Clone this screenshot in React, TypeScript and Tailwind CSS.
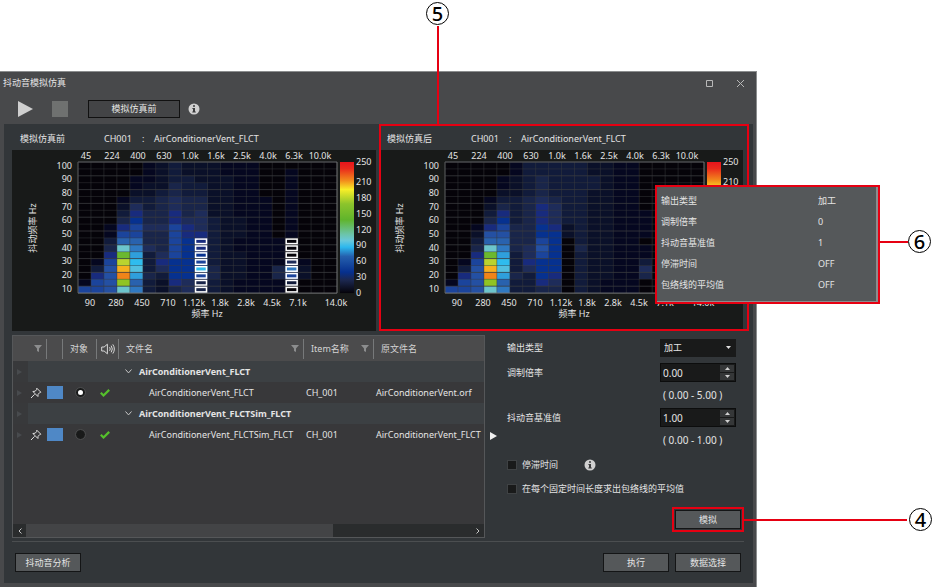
import { useState } from 'react'
import type { ReactNode } from 'react'
import clsx from 'clsx'

const CELL_W = 12.95
const CELL_H = 6.9
const GRID_X = 66
const GRID_Y = 12
const GRID_W = CELL_W * 20
const GRID_H = CELL_H * 19

const PALETTE: Record<string, string> = {
	'.': '#050309',
	a: '#050720',
	b: '#0a1029',
	c: '#111b3b',
	d: '#19254a',
	e: '#1e2c5a',
	f: '#182b7e',
	g: '#063190',
	h: '#1b449c',
	i: '#2450a3',
	j: '#2962ae',
	k: '#2f79c2',
	l: '#2f9fdc',
	m: '#2fbcee',
	n: '#52bfdf',
	o: '#6cc5cc',
	p: '#6bb82f',
	q: '#b9d32f',
	r: '#f6b01f',
	s: '#f08419',
	t: '#90c424',
}

// One string per row, 100 Hz at the top and 10 Hz at the bottom
const BEFORE = [
	'.....abcbbbaaa......',
	'.....abcbbbaaa..a...',
	'....aabccbbbaa..a...',
	'....abbdccbbaa..a...',
	'....bbcdccbbaa..a...',
	'...accdeddbbaaa.a...',
	'...becdeddbbaaa.a...',
	'...cfddfdebbaaa.a...',
	'...dgddfeecbbaa.a...',
	'..afheehfecbbaa.a...',
	'..ahhddhffcbbaa.a...',
	'..cjjddhgfcbaaaa....',
	'..dokedhgfcbaaaa....',
	'..fplcehggcbbaaa....',
	'.ahqmcfgghcbbaaaea..',
	'.cirnceggmdbbaadkb..',
	'.fisldcgghdbbaadhb..',
	'ahitjcbfedcbaaaac...',
	'hhiokcbdedcbaaaa....',
]

const AFTER = [
	'.....acccccbbaa.....',
	'.....acccccbbaa.....',
	'....abcdccccbaa.....',
	'....abcdccccbaa.....',
	'....bbcdcccbbaa.....',
	'...accdedccbbaa.....',
	'...bdcdfeccbbaa.....',
	'...cfcdfeccbbaaa....',
	'...dgcdfeccbbaaa....',
	'..afhddgfbcbbaaa....',
	'..biiddggbcbbaaa....',
	'..cjjddhg.cbbaa.....',
	'..dokdeig.dbbaaa....',
	'..fplcehg.cbbaaa....',
	'.ahqmcfgg.cbbaac....',
	'.cirncegg.cbbaae....',
	'.fisldcgf.cbbaad....',
	'ahitjccfe.cbaaa.....',
	'hhiokccdd.cbaaa.....',
]

const TOP_LABELS = ['45', '224', '400', '630', '1.0k', '1.6k', '2.5k', '4.0k', '6.3k', '10.0k']
const BOTTOM_LABELS = ['90', '280', '450', '710', '1.12k', '1.8k', '2.8k', '4.5k', '7.1k']
const LEVELS = [250, 210, 180, 150, 120, 90, 60, 30, 0]

interface HeatmapProps {
	id: string
	rows: string[]
	selected?: number[]
}

function Heatmap({ id, rows, selected = [] }: HeatmapProps) {
	return (
		<svg
			viewBox="0 0 364 181"
			className="block w-full overflow-visible bg-[#181a19] text-[9px]"
			fill="#e4e4e4"
			dominantBaseline="central"
		>
			<defs>
				<linearGradient id={id} x1="0" y1="0" x2="0" y2="1">
					<stop offset="0" stopColor="#e8141c" />
					<stop offset="0.05" stopColor="#ea2a1c" />
					<stop offset="0.14" stopColor="#f28a1c" />
					<stop offset="0.21" stopColor="#f8ee28" />
					<stop offset="0.32" stopColor="#8cc42c" />
					<stop offset="0.44" stopColor="#60b42c" />
					<stop offset="0.55" stopColor="#6cc4a8" />
					<stop offset="0.6" stopColor="#68c8dc" />
					<stop offset="0.65" stopColor="#2cb8ee" />
					<stop offset="0.72" stopColor="#2560ae" />
					<stop offset="0.84" stopColor="#06308e" />
					<stop offset="0.9" stopColor="#1c2850" />
					<stop offset="1" stopColor="#050309" />
				</linearGradient>
			</defs>

			<g shapeRendering="crispEdges">
				{rows.map((row, y) =>
					row.split('').map((level, x) => (
						<rect
							key={`${x}-${y}`}
							x={GRID_X + x * CELL_W}
							y={GRID_Y + y * CELL_H}
							width={CELL_W}
							height={CELL_H}
							fill={PALETTE[level]}
						/>
					)),
				)}
			</g>

			{Array.from({ length: 20 }, (_, i) => (
				<path
					key={i}
					d={`M${GRID_X + i * CELL_W} ${GRID_Y}v${GRID_H}`}
					stroke="#3a3b3e"
					strokeOpacity="0.5"
				/>
			))}
			{Array.from({ length: 19 }, (_, i) => (
				<path
					key={i}
					d={`M${GRID_X} ${GRID_Y + i * CELL_H}h${GRID_W}`}
					stroke="#3a3b3e"
					strokeOpacity={i % 2 ? 0.45 : 0.8}
				/>
			))}
			<path d={`M${GRID_X} ${GRID_Y + GRID_H}V${GRID_Y}h${GRID_W}`} fill="none" stroke="#555759" />
			<path
				d={`M${GRID_X} ${GRID_Y + GRID_H}h${GRID_W}V${GRID_Y}`}
				fill="none"
				stroke="#77797a"
			/>

			{selected.map((col) =>
				Array.from({ length: 8 }, (_, i) => (
					<rect
						key={`${col}-${i}`}
						x={GRID_X + col * CELL_W + 1}
						y={GRID_Y + (11 + i) * CELL_H + 1.2}
						width={CELL_W - 2}
						height={CELL_H - 2.4}
						fill="none"
						stroke="#fff"
						strokeWidth="1.5"
					/>
				)),
			)}

			{TOP_LABELS.map((label, i) => (
				<text key={label} x={74 + i * 26} y="5" textAnchor="middle">
					{label}
				</text>
			))}
			{BOTTOM_LABELS.map((label, i) => (
				<text key={label} x={78 + i * 26} y="152" textAnchor="middle">
					{label}
				</text>
			))}
			<text x="324" y="152" textAnchor="middle">
				14.0k
			</text>
			{Array.from({ length: 10 }, (_, i) => (
				<text key={i} x="60" y={15 + i * 13.7} textAnchor="end">
					{100 - i * 10}
				</text>
			))}
			<text x="195" y="163" textAnchor="middle">
				频率 Hz
			</text>
			<text transform="translate(20 78) rotate(-90)" textAnchor="middle">
				抖动频率 Hz
			</text>

			<rect x="328" y={GRID_Y} width="14" height={GRID_H} fill={`url(#${id})`} />
			{LEVELS.map((level) => (
				<text key={level} x="344" y={GRID_Y - 1 + GRID_H * (1 - level / 250)}>
					{level}
				</text>
			))}
		</svg>
	)
}

function ChartTitle({ title }: { title: string }) {
	return (
		<h2 className="flex h-[26px] items-center pt-1 pl-2">
			<span className="w-[84px]">{title}</span>
			<span className="w-[38px]">CH001</span>
			<span className="w-3">:</span>
			<span>AirConditionerVent_FLCT</span>
		</h2>
	)
}

function InfoIcon() {
	return (
		<svg width="12" height="12" viewBox="0 0 12 12">
			<circle cx="6" cy="6" r="5.5" fill="#d0d0d0" />
			<path d="M5 2.2h2v1.6H5zM4.4 5H7v3.6h.8v1H4.3v-1H5V6h-.6z" fill="#3a3b3c" />
		</svg>
	)
}

function Funnel() {
	return (
		<svg width="8" height="7" viewBox="0 0 8 7" fill="#8c8d8e">
			<path d="M0 0h8L5 3.5V7L3 6V3.5z" />
		</svg>
	)
}

function Speaker() {
	return (
		<svg width="14" height="12" viewBox="0 0 14 12" fill="none" stroke="#d8d8d8">
			<path d="M.7 4v4h2.4l3.3 2.8V1.2L3.1 4z" />
			<path d="M8.6 4.2q1.3 1.8 0 3.6M10.2 2.7q2.2 3.3 0 6.6M11.8 1.4q3.1 4.6 0 9.2" />
		</svg>
	)
}

function Pin() {
	return (
		<svg width="12" height="12" viewBox="0 0 12 12" fill="none" stroke="#e0e0e0">
			<path d="M6.8 1.2l4 4-1.2.5-1.5 1.6-.2 2.2-5-5 2.3-.3 1.4-1.6zM4.6 7.3L1 11" />
		</svg>
	)
}

function Check() {
	return (
		<svg width="10" height="8" viewBox="0 0 10 8" fill="none" stroke="#55c02c" strokeWidth="2.2">
			<path d="M.8 3.8l2.7 2.7L9.2.9" />
		</svg>
	)
}

function Badge({ children, className }: { children: ReactNode; className?: string }) {
	return (
		<span
			className={clsx(
				'absolute flex size-[23px] items-center justify-center rounded-full border border-black bg-white text-[20px] leading-none font-medium text-black',
				className,
			)}
		>
			{children}
		</span>
	)
}

function PushButton({ children, className }: { children: ReactNode; className?: string }) {
	return (
		<button
			type="button"
			className={clsx(
				'h-[19px] w-[66px] border border-[#141516] bg-[#55585a] text-center hover:bg-[#626567]',
				className,
			)}
		>
			{children}
		</button>
	)
}

function GroupRow({ name }: { name: string }) {
	return (
		<tr className="h-[21px] bg-[#3c4043]">
			<td className="bg-[#38393b] pl-1">
				<svg width="5" height="6" viewBox="0 0 5 6" fill="#484b4e">
					<path d="M0 0l5 3-5 3z" />
				</svg>
			</td>
			<td colSpan={4} />
			<td colSpan={3}>
				<div className="flex items-center gap-[7px] pl-[6px] font-bold">
					<svg width="7" height="5" viewBox="0 0 7 5" fill="none" stroke="#c8c8c8">
						<path d="M.5.5l3 3.4 3-3.4" />
					</svg>
					{name}
				</div>
			</td>
		</tr>
	)
}

interface FileRowProps {
	name: string
	source: string
	checked: boolean
	onSelect: () => void
}

function FileRow({ name, source, checked, onSelect }: FileRowProps) {
	return (
		<tr className="h-[21px]">
			<td className="pl-1">
				<svg width="5" height="6" viewBox="0 0 5 6" fill="#484b4e">
					<path d="M0 0l5 3-5 3z" />
				</svg>
			</td>
			<td className="pl-[2px]">
				<Pin />
			</td>
			<td>
				<div className="h-[13px] bg-[#4f88c6]" />
			</td>
			<td>
				<input
					type="radio"
					name="target"
					aria-label={name}
					checked={checked}
					onChange={onSelect}
					className="mx-auto block size-[9px] appearance-none rounded-full border-2 border-[#191a1a] bg-[#191a1a] outline outline-[#4a4b4c] checked:bg-white"
				/>
			</td>
			<td className="pl-[3px]">
				<Check />
			</td>
			<td className="pl-[30px]">{name}</td>
			<td className="pl-[2px]">CH_001</td>
			<td className="overflow-hidden pl-[2px]">{source}</td>
		</tr>
	)
}

function FileTable() {
	const [target, setTarget] = useState(0)

	return (
		<div className="flex h-[203px] min-w-0 flex-1 flex-col border border-[#555759] bg-[#38383a]">
			<table className="w-full table-fixed text-left whitespace-nowrap [&_svg]:block">
				<colgroup>
					<col className="w-[15px]" />
					<col className="w-[19px]" />
					<col className="w-4" />
					<col className="w-[34px]" />
					<col className="w-[22px]" />
					<col className="w-[185px]" />
					<col className="w-[70px]" />
					<col />
				</colgroup>
				<thead>
					<tr className="h-[25px] bg-[#4b4b4c] text-[#d4d4d4] [&>th]:font-normal">
						<th />
						<th>
							<div className="flex h-5 items-center border-r border-[#77797a] pl-[6px]">
								<Funnel />
							</div>
						</th>
						<th>
							<div className="h-5 border-r border-[#77797a]" />
						</th>
						<th>
							<div className="flex h-5 items-center border-r border-[#77797a] pl-[7px]">对象</div>
						</th>
						<th>
							<div className="flex h-5 items-center border-r border-[#77797a] pl-1">
								<Speaker />
							</div>
						</th>
						<th>
							<div className="flex h-5 items-center justify-between border-r border-[#77797a] pr-1 pl-[7px]">
								文件名
								<Funnel />
							</div>
						</th>
						<th>
							<div className="flex h-5 items-center justify-between border-r border-[#77797a] pr-1 pl-[7px]">
								Item名称
								<Funnel />
							</div>
						</th>
						<th className="pl-[7px]">原文件名</th>
					</tr>
				</thead>
				<tbody>
					<GroupRow name="AirConditionerVent_FLCT" />
					<FileRow
						name="AirConditionerVent_FLCT"
						source="AirConditionerVent.orf"
						checked={target === 0}
						onSelect={() => setTarget(0)}
					/>
					<GroupRow name="AirConditionerVent_FLCTSim_FLCT" />
					<FileRow
						name="AirConditionerVent_FLCTSim_FLCT"
						source="AirConditionerVent_FLCT"
						checked={target === 1}
						onSelect={() => setTarget(1)}
					/>
				</tbody>
			</table>

			<div className="mt-auto flex h-[13px] bg-[#2a2c2d]">
				<button type="button" aria-label="向左滚动" className="flex w-[13px] items-center justify-center">
					<svg width="4" height="6" viewBox="0 0 4 6" fill="none" stroke="#c8c8c8">
						<path d="M3.5.5L1 3l2.5 2.5" />
					</svg>
				</button>
				<div className="flex-1">
					<div className="h-full w-[69%] bg-[#434446]" />
				</div>
				<button type="button" aria-label="向右滚动" className="flex w-[13px] items-center justify-center">
					<svg width="4" height="6" viewBox="0 0 4 6" fill="none" stroke="#c8c8c8">
						<path d="M.5.5L3 3 .5 5.5" />
					</svg>
				</button>
			</div>
		</div>
	)
}

interface SpinBoxProps {
	id: string
	initial: number
	max: number
}

function SpinBox({ id, initial, max }: SpinBoxProps) {
	const [value, setValue] = useState(initial)
	const step = (delta: number) => setValue((v) => Math.min(max, Math.max(0, v + delta)))

	return (
		<div className="flex h-[19px] w-[76px] border border-[#0c0d0d] bg-[#191a1a]">
			<input
				id={id}
				type="text"
				value={value.toFixed(2)}
				onChange={(e) => setValue(Number(e.target.value) || 0)}
				className="w-0 flex-1 bg-transparent pl-[2px] text-[10px] outline-none"
			/>
			<div className="flex w-4 flex-col gap-px p-px">
				<button
					type="button"
					aria-label="增加"
					onClick={() => step(0.1)}
					className="flex flex-1 items-center justify-center bg-[#353738]"
				>
					<svg width="5" height="3" viewBox="0 0 5 3" fill="#d0d0d0">
						<path d="M0 3l2.5-3L5 3z" />
					</svg>
				</button>
				<button
					type="button"
					aria-label="减少"
					onClick={() => step(-0.1)}
					className="flex flex-1 items-center justify-center bg-[#353738]"
				>
					<svg width="5" height="3" viewBox="0 0 5 3" fill="#d0d0d0">
						<path d="M0 0l2.5 3L5 0z" />
					</svg>
				</button>
			</div>
		</div>
	)
}

function Settings() {
	return (
		<div className="flex w-[268px] flex-col pt-1 pr-[17px] pl-[22px]">
			<div className="flex items-center justify-between">
				<label htmlFor="output-type">输出类型</label>
				<div className="relative">
					<select
						id="output-type"
						className="block h-[18px] w-[76px] appearance-none bg-[#191a1a] pl-1 outline-none"
					>
						<option>加工</option>
						<option>原始</option>
					</select>
					<svg
						width="5"
						height="3"
						viewBox="0 0 5 3"
						fill="#e0e0e0"
						className="pointer-events-none absolute top-[7px] right-[5px]"
					>
						<path d="M0 0h5L2.5 3z" />
					</svg>
				</div>
			</div>
			<div className="mt-[6px] flex items-center justify-between">
				<label htmlFor="rate">调制倍率</label>
				<SpinBox id="rate" initial={0} max={5} />
			</div>
			<p className="mt-[6px] w-[73px] self-end text-[10px]">( 0.00 - 5.00 )</p>
			<div className="mt-[6px] flex items-center justify-between">
				<label htmlFor="base">抖动音基准值</label>
				<SpinBox id="base" initial={1} max={1} />
			</div>
			<p className="mt-[6px] w-[73px] self-end text-[10px]">( 0.00 - 1.00 )</p>
			<div className="mt-3 flex h-3 items-center">
				<Option id="stagnation">停滞时间</Option>
				<span className="ml-[26px]">
					<InfoIcon />
				</span>
			</div>
			<div className="mt-3 flex h-3 items-center">
				<Option id="average">在每个固定时间长度求出包络线的平均值</Option>
			</div>
			<div className="relative mt-3 -mr-2 flex self-end border-2 border-[#e60012] p-px">
				<PushButton className="h-5">模拟</PushButton>
				<div className="absolute top-[10px] left-full h-[2px] w-[165px] bg-[#e60012]" />
				<Badge className="-top-px left-[235px]">4</Badge>
			</div>
		</div>
	)
}

function Option({ id, children }: { id: string; children: ReactNode }) {
	return (
		<>
			<input
				id={id}
				type="checkbox"
				className="size-[10px] appearance-none border border-[#3f4244] bg-[#191a1a] checked:bg-[#4f88c6]"
			/>
			<label htmlFor={id} className="pl-[5px]">
				{children}
			</label>
		</>
	)
}

const RESULT = [
	['输出类型', '加工'],
	['调制倍率', '0'],
	['抖动音基准值', '1'],
	['停滞时间', 'OFF'],
	['包络线的平均值', 'OFF'],
]

function ResultPopup() {
	return (
		<div className="absolute top-[61px] left-[276px] w-[225px] border-2 border-[#e60012]">
			<dl className="border-r-2 border-b border-[#8b8d8e] bg-[#55585a] pt-[3px] pb-[6px] pl-1">
				{RESULT.map(([name, value]) => (
					<div key={name} className="flex h-[21px] items-center">
						<dt className="w-[157px]">{name}</dt>
						<dd>{value}</dd>
					</div>
				))}
			</dl>
			<div className="absolute top-[54px] left-full h-[2px] w-[30px] bg-[#e60012]" />
			<Badge className="top-[43px] left-[251px]">6</Badge>
		</div>
	)
}

export default function App() {
	return (
		<div className="bg-white pt-[71px] pr-[176px] font-['Noto_Sans','Noto_Sans_CJK_SC',sans-serif] text-[9px] leading-[14px] text-[#e4e4e4]">
			<main className="border-t border-r border-[#8b8d8e] bg-[#48494b] pr-[3px] pb-1 pl-1">
				<header className="flex h-[22px] items-center justify-between pr-2">
					<h1 className="-ml-px">抖动音模拟仿真</h1>
					<div className="flex items-center gap-[22px]">
						<button type="button" aria-label="最大化">
							<svg width="9" height="9" viewBox="0 0 9 9" fill="none" stroke="#b8b8b8">
								<path d="M1.5 1.5h6v6h-6z" />
							</svg>
						</button>
						<button type="button" aria-label="关闭">
							<svg width="9" height="9" viewBox="0 0 9 9" stroke="#b8b8b8">
								<path d="M1 1l7 7M8 1L1 8" />
							</svg>
						</button>
					</div>
				</header>

				<div className="flex h-[30px] items-center pl-[13px]">
					<button type="button" aria-label="播放">
						<svg width="16" height="16" viewBox="0 0 16 16" fill="#cfcfcf">
							<path d="M1 0l15 8-15 8z" />
						</svg>
					</button>
					<button type="button" aria-label="停止" className="ml-[19px] size-4 bg-[#6f7170]" />
					<button
						type="button"
						className="mr-2 ml-5 h-[18px] w-[92px] border border-[#111] bg-[#434446]"
					>
						模拟仿真前
					</button>
					<InfoIcon />
				</div>

				<div className="bg-[#323639] pb-[11px]">
					<div className="grid grid-cols-[364fr_370fr] gap-[3px] pr-1 pl-2">
						<section>
							<ChartTitle title="模拟仿真前" />
							<Heatmap id="scale-before" rows={BEFORE} selected={[9, 16]} />
						</section>
						<section className="relative pr-[6px]">
							<ChartTitle title="模拟仿真后" />
							<Heatmap id="scale-after" rows={AFTER} />
							<div className="pointer-events-none absolute inset-0 border-2 border-[#e60012]" />
							<div className="absolute -top-[98px] left-[58px] h-[98px] w-[2px] bg-[#e60012]" />
							<Badge className="-top-[122px] left-[47px]">5</Badge>
							<ResultPopup />
						</section>
					</div>

					<div className="relative mt-1 flex pl-2">
						<FileTable />
						<svg
							width="7"
							height="8"
							viewBox="0 0 7 8"
							fill="#f0f0f0"
							className="absolute top-[97px] right-[256px]"
						>
							<path d="M0 0l7 4-7 4z" />
						</svg>
						<Settings />
					</div>

					<footer className="mt-[3px] mr-[9px] ml-2 flex border-t border-[#4b4e50] px-[3px] pt-[11px]">
						<PushButton>抖动音分析</PushButton>
						<PushButton className="mr-[6px] ml-auto">执行</PushButton>
						<PushButton>数据选择</PushButton>
					</footer>
				</div>
			</main>
		</div>
	)
}
